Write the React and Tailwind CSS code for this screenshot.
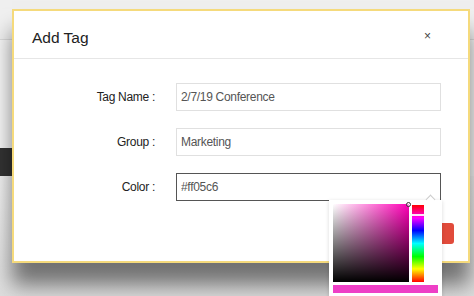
import { useState } from 'react'

const fields = [
  { label: 'Tag Name :', value: '2/7/19 Conference' },
  { label: 'Group :', value: 'Marketing' },
  { label: 'Color :', value: '#ff05c6', active: true },
]

function ColorPicker({ hue = 317, color = '#ee3fc6' }) {
  return (
    <div className="absolute left-[329px] top-[200px] w-[113px] h-[110px] bg-white p-[4px] shadow-[0_1px_4px_rgba(0,0,0,0.15)]">
      <div className="absolute -top-[4px] left-[98px] w-[7px] h-[7px] rotate-45 bg-white border-l border-t border-[#ccc]" />
      <div className="flex gap-[3px]">
        <div
          className="relative w-[76px] h-[78px]"
          style={{ background: `linear-gradient(to bottom, transparent, #000), linear-gradient(to right, #fff, hsl(${hue},100%,50%))` }}
        >
          <div className="absolute -right-[2px] -top-[2px] w-[5px] h-[5px] rounded-full border border-[#333] bg-white/60" />
        </div>
        <div className="relative w-[12px] h-[77px] mt-[1px] bg-[linear-gradient(to_bottom,#f00_0%,#f0f_17%,#00f_33%,#0ff_50%,#0f0_67%,#ff0_83%,#f00_100%)]">
          <div className="absolute left-0 right-0 top-[9px] h-[2px] bg-white/90" />
        </div>
      </div>
      <div className="mt-[3px] h-[8px] w-[105px]" style={{ background: color }} />
    </div>
  )
}

export default function App() {
  const [values] = useState(fields)
  return (
    <div className="relative w-[474px] h-[296px] overflow-hidden bg-[#f2f2f2] font-['Liberation_Sans',Arial,sans-serif]">
      {/* page behind the dialog */}
      <div className="flex flex-col h-full">
        <div className="h-[9px] bg-[#efefef]" />
        <div className="h-[31px] bg-[#f0f0f0] border-b border-[#dcdcdc]" />
        <div className="h-[108px] bg-[#f7f7f7]" />
        <div className="h-[28px] flex">
          <div className="w-[14px] bg-[#333]" />
          <div className="flex-1 bg-[#f7f7f7]" />
        </div>
        <div className="flex-1 bg-gradient-to-b from-[#f2f2f2] to-[#dedede]" />
      </div>

      <div className="absolute left-[12px] top-[9px] w-[458px] h-[254px] bg-white border-2 border-[#f5da7c] shadow-[0_22px_20px_rgba(0,0,0,0.5)] flex flex-col">
        <div className="h-[48px] flex items-center justify-between pl-[18px] pr-[37px] pt-[6px] border-b border-[#e6e6e6]">
          <h2 className="text-[15.5px] text-[#222]">Add Tag</h2>
          <button className="text-[12px] leading-none text-[#444] -mt-[4px]">×</button>
        </div>

        <div className="flex flex-col gap-[17px] pt-[24px] text-[12px] tracking-[-0.3px]">
          {values.map(f => (
            <div key={f.label} className="flex items-center">
              <label className="w-[141px] text-right text-[#222]">{f.label}</label>
              <input
                readOnly
                value={f.value}
                className={`ml-[21px] w-[265px] h-[28px] px-[4px] text-[#555] outline-none border ${f.active ? 'border-[#555]' : 'border-[#e0e0e0]'}`}
              />
            </div>
          ))}
        </div>

        <div className="flex justify-end pr-[14px] pt-[22px]">
          <button className="w-[70px] h-[21px] rounded-[3px] bg-[#e14b3b]" />
        </div>
      </div>

      <ColorPicker />
    </div>
  )
}
